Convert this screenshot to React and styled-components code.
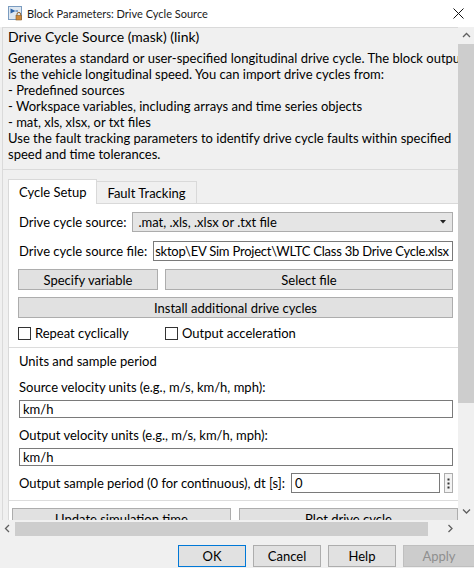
import React from 'react';
import styled, { createGlobalStyle } from 'styled-components';

const FONT = 'Lato, "Liberation Sans", sans-serif';

const GlobalStyle = createGlobalStyle`
  html, body {
    margin: 0;
    padding: 0;
    background: #f0f0f0;
  }
  body {
    font-family: ${FONT};
  }
`;

const Window = styled.div`
  width: 474px;
  height: 568px;
  display: flex;
  flex-direction: column;
  background: #f0f0f0;
  overflow: hidden;
  font-family: ${FONT};
  font-size: 13px;
  color: #000;
`;

const TitleBar = styled.div`
  height: 27px;
  flex: none;
  background: #fff;
  display: flex;
  align-items: center;
  padding-left: 7px;
  gap: 3px;
  font-size: 11px;
  color: #1a1a1a;
`;

const TitleText = styled.span`
  flex: 1;
  white-space: nowrap;
`;

const CloseBox = styled.div`
  width: 32px;
  height: 27px;
  display: flex;
  align-items: center;
  justify-content: center;
`;

const ScrollFrame = styled.div`
  height: 510px;
  flex: none;
  display: grid;
  grid-template-columns: 1fr 16px;
  grid-template-rows: 1fr 17px;
`;

const Viewport = styled.div`
  overflow: hidden;
  padding-left: 2px;
`;

const Content = styled.div`
  border-left: 1px solid #dadada;
  border-top: 1px solid #dadada;
`;

const MaskHeader = styled.div`
  padding: 0 0 7px 5px;
  border-bottom: 1px solid #dadada;
`;

const MaskTitle = styled.div`
  font-size: 14px;
  line-height: 18px;
  white-space: nowrap;
`;

const Description = styled.div`
  margin-top: 4px;
  line-height: 16px;
  white-space: nowrap;
`;

const TabStrip = styled.div`
  display: flex;
  align-items: flex-end;
  padding: 9px 0 0 5px;
`;

const Tab = styled.div`
  height: ${(p) => (p.$active ? 24 : 21)}px;
  padding: 0 10px;
  display: flex;
  align-items: center;
  background: ${(p) => (p.$active ? '#fff' : '#f0f0f0')};
  border: 1px solid #d9d9d9;
  border-bottom: none;
  border-left: ${(p) => (p.$active ? '1px solid #d9d9d9' : 'none')};
  white-space: nowrap;
  margin-bottom: ${(p) => (p.$active ? -1 : 0)}px;
  position: relative;
`;

const Panel = styled.div`
  margin-left: 5px;
  background: #fff;
  border: 1px solid #d9d9d9;
  border-right: none;
`;

const SetupSection = styled.div`
  display: flex;
  flex-direction: column;
  padding: 8px 5px 7px 10px;
  border-bottom: 1px solid #dcdcdc;
`;

const Row = styled.div`
  display: flex;
  align-items: center;
  gap: 6px;
  height: 20px;
  margin-top: ${(p) => p.$top || 0}px;
`;

const Label = styled.span`
  white-space: nowrap;
  line-height: 16px;
`;

const Dropdown = styled.div`
  flex: 1;
  height: 20px;
  box-sizing: border-box;
  background: #e5e5e5;
  border: 1px solid #acacac;
  display: flex;
  align-items: center;
  justify-content: space-between;
  padding: 0 6px 0 5px;
  white-space: nowrap;
`;

const TextBox = styled.div`
  flex: 1;
  min-width: 0;
  height: 20px;
  box-sizing: border-box;
  background: #fff;
  border: 1px solid #7a7a7a;
  display: flex;
  align-items: center;
  padding: 0 ${(p) => (p.$tight ? 1 : 3)}px;
  letter-spacing: ${(p) => (p.$tight ? '-0.22px' : 'normal')};
  white-space: nowrap;
  overflow: hidden;
  margin-top: ${(p) => p.$top || 0}px;
`;

const ButtonGrid = styled.div`
  display: grid;
  grid-template-columns: ${(p) => p.$first || '140px'} 1fr;
  gap: ${(p) => p.$gap ?? 7}px;
  margin-top: ${(p) => p.$top || 0}px;
  margin-left: ${(p) => p.$left ?? -1}px;
`;

const Button = styled.div`
  height: 21px;
  box-sizing: border-box;
  background: #e1e1e1;
  border: 1px solid #adadad;
  display: flex;
  align-items: center;
  justify-content: center;
  white-space: nowrap;
`;

const CheckItem = styled.label`
  display: flex;
  align-items: center;
  gap: 4px;
  height: 14px;
  white-space: nowrap;
`;

const CheckBox = styled.span`
  width: 13px;
  height: 13px;
  box-sizing: border-box;
  border: 1px solid #333;
  background: #fff;
  flex: none;
`;

const GroupBox = styled.div`
  padding: 5px 5px 7px 10px;
  border-bottom: 1px solid #dcdcdc;
  display: flex;
  flex-direction: column;
`;

const GroupTitle = styled.div`
  line-height: 16px;
  white-space: nowrap;
`;

const FieldLabel = styled.div`
  line-height: 16px;
  white-space: nowrap;
  margin-top: ${(p) => p.$top || 0}px;
`;

const MoreButton = styled.div`
  width: 9px;
  height: 20px;
  box-sizing: border-box;
  border: 1px solid #adadad;
  background: #f3f3f3;
  display: flex;
  align-items: center;
  justify-content: center;
  margin-left: -2px;
`;

const LowerButtons = styled.div`
  padding: 7px 0 0 3px;
`;

const VScroll = styled.div`
  display: flex;
  flex-direction: column;
  background: #f0f0f0;
`;

const Arrow = styled.div`
  height: ${(p) => p.$h || 17}px;
  width: ${(p) => p.$w || 'auto'};
  flex: none;
  display: flex;
  align-items: center;
  justify-content: center;
`;

const VThumb = styled.div`
  height: 359px;
  background: #cdcdcd;
  flex: none;
`;

const Track = styled.div`
  flex: 1;
`;

const HScroll = styled.div`
  display: flex;
  align-items: stretch;
  background: #f0f0f0;
`;

const HThumb = styled.div`
  width: 413px;
  margin: 2px 0 1px;
  background: #cdcdcd;
  flex: none;
`;

const Corner = styled.div`
  background: #f0f0f0;
`;

const Footer = styled.div`
  flex: 1;
  display: flex;
  gap: 7px;
  padding: 8px 0 0 178px;
`;

const DialogButton = styled.div`
  width: ${(p) => p.$w || 68}px;
  height: 22px;
  flex: none;
  box-sizing: border-box;
  display: flex;
  align-items: center;
  justify-content: center;
  background: ${(p) => (p.$disabled ? '#cccccc' : '#e1e1e1')};
  color: ${(p) => (p.$disabled ? '#8f8f8f' : '#000')};
  border: 1px solid ${(p) => (p.$primary ? '#0078d7' : p.$disabled ? '#bfbfbf' : '#adadad')};
`;

const Chevron = ({ dir }) => {
  const pts = {
    up: '1,5 4.5,1.5 8,5',
    down: '1,1.5 4.5,5 8,1.5',
    left: '5,1 1.5,4.5 5,8',
    right: '1.5,1 5,4.5 1.5,8',
  }[dir];
  const vertical = dir === 'up' || dir === 'down';
  return (
    <svg width={vertical ? 9 : 7} height={vertical ? 7 : 9} viewBox={vertical ? '0 0 9 7' : '0 0 7 9'}>
      <polyline points={pts} fill="none" stroke="#606060" strokeWidth="1.3" />
    </svg>
  );
};

const BlockIcon = () => (
  <svg width="17" height="17" viewBox="0 0 17 17">
    <rect x="1.5" y="1.5" width="13" height="13" fill="#dfe8f1" stroke="#7b9cc0" />
    <polygon points="3.5,3.5 8.5,6 3.5,8.5" fill="#2a62a8" />
    <line x1="8.5" y1="6" x2="11" y2="6" stroke="#2a62a8" strokeWidth="1" />
    <path d="M10 10.5 V9.2 a1.8 1.8 0 0 1 3.6 0 V10.5" fill="none" stroke="#8a5a22" strokeWidth="1" />
    <rect x="9" y="10.5" width="5.6" height="4.5" fill="#d08a3a" stroke="#8a5a22" strokeWidth="0.6" />
  </svg>
);

const CloseIcon = () => (
  <svg width="11" height="11" viewBox="0 0 11 11">
    <path d="M0.5 0.5 L10.5 10.5 M10.5 0.5 L0.5 10.5" stroke="#111" strokeWidth="1" />
  </svg>
);

const DropArrow = () => (
  <svg width="6" height="4" viewBox="0 0 6 4">
    <polygon points="0,0 6,0 3,3.5" fill="#222" />
  </svg>
);

const Dots = () => (
  <svg width="3" height="11" viewBox="0 0 3 11">
    <rect x="0.5" y="0.5" width="2" height="2" fill="#333" />
    <rect x="0.5" y="4.5" width="2" height="2" fill="#333" />
    <rect x="0.5" y="8.5" width="2" height="2" fill="#333" />
  </svg>
);

const descriptionLines = [
  'Generates a standard or user-specified longitudinal drive cycle. The block output',
  'is the vehicle longitudinal speed. You can import drive cycles from:',
  '- Predefined sources',
  '- Workspace variables, including arrays and time series objects',
  '- mat, xls, xlsx, or txt files',
  'Use the fault tracking parameters to identify drive cycle faults within specified',
  'speed and time tolerances.',
];

export default function App() {
  return (
    <Window>
      <GlobalStyle />
      <TitleBar>
        <BlockIcon />
        <TitleText>Block Parameters: Drive Cycle Source</TitleText>
        <CloseBox>
          <CloseIcon />
        </CloseBox>
      </TitleBar>

      <ScrollFrame>
        <Viewport>
          <Content>
            <MaskHeader>
              <MaskTitle>Drive Cycle Source (mask) (link)</MaskTitle>
              <Description>
                {descriptionLines.map((line) => (
                  <div key={line}>{line}</div>
                ))}
              </Description>
            </MaskHeader>

            <TabStrip>
              <Tab $active>Cycle Setup</Tab>
              <Tab>Fault Tracking</Tab>
            </TabStrip>

            <Panel>
              <SetupSection>
                <Row>
                  <Label>Drive cycle source:</Label>
                  <Dropdown>
                    <span>.mat, .xls, .xlsx or .txt file</span>
                    <DropArrow />
                  </Dropdown>
                </Row>
                <Row $top={9}>
                  <Label>Drive cycle source file:</Label>
                  <TextBox $tight>sktop\EV Sim Project\WLTC Class 3b Drive Cycle.xlsx</TextBox>
                </Row>
                <ButtonGrid $top={8}>
                  <Button>Specify variable</Button>
                  <Button>Select file</Button>
                </ButtonGrid>
                <ButtonGrid $first="0px" $gap={0} $top={7}>
                  <span />
                  <Button>Install additional drive cycles</Button>
                </ButtonGrid>
                <ButtonGrid $top={8}>
                  <CheckItem>
                    <CheckBox />
                    Repeat cyclically
                  </CheckItem>
                  <CheckItem>
                    <CheckBox />
                    Output acceleration
                  </CheckItem>
                </ButtonGrid>
              </SetupSection>

              <GroupBox>
                <GroupTitle>Units and sample period</GroupTitle>
                <FieldLabel $top={10}>Source velocity units (e.g., m/s, km/h, mph):</FieldLabel>
                <TextBox $top={5}>km/h</TextBox>
                <FieldLabel $top={9}>Output velocity units (e.g., m/s, km/h, mph):</FieldLabel>
                <TextBox $top={5}>km/h</TextBox>
                <Row $top={7}>
                  <Label>Output sample period (0 for continuous), dt [s]:</Label>
                  <TextBox>0</TextBox>
                  <MoreButton>
                    <Dots />
                  </MoreButton>
                </Row>
              </GroupBox>

              <LowerButtons>
                <ButtonGrid $first="219px" $gap={8} $left={0}>
                  <Button>Update simulation time</Button>
                  <Button>Plot drive cycle</Button>
                </ButtonGrid>
              </LowerButtons>
            </Panel>
          </Content>
        </Viewport>

        <VScroll>
          <Arrow>
            <Chevron dir="up" />
          </Arrow>
          <VThumb />
          <Track />
          <Arrow>
            <Chevron dir="down" />
          </Arrow>
        </VScroll>

        <HScroll>
          <Arrow $w="15px" $h={17}>
            <Chevron dir="left" />
          </Arrow>
          <HThumb />
          <Track />
          <Arrow $w="16px" $h={17}>
            <Chevron dir="right" />
          </Arrow>
        </HScroll>
        <Corner />
      </ScrollFrame>

      <Footer>
        <DialogButton $primary>OK</DialogButton>
        <DialogButton>Cancel</DialogButton>
        <DialogButton>Help</DialogButton>
        <DialogButton $disabled $w={72}>Apply</DialogButton>
      </Footer>
    </Window>
  );
}
